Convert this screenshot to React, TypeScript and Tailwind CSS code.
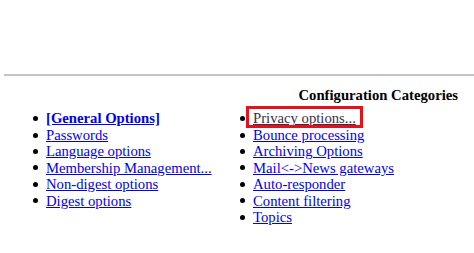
import React from 'react'

const leftItems = [
  { label: '[General Options]', bold: true },
  { label: 'Passwords' },
  { label: 'Language options' },
  { label: 'Membership Management...' },
  { label: 'Non-digest options' },
  { label: 'Digest options' },
]

const rightItems = [
  { label: 'Privacy options...', active: true },
  { label: 'Bounce processing' },
  { label: 'Archiving Options' },
  { label: 'Mail<->News gateways' },
  { label: 'Auto-responder' },
  { label: 'Content filtering' },
  { label: 'Topics' },
]

function Item({ label, bold, active }: { label: string; bold?: boolean; active?: boolean }) {
  return (
    <li className="flex items-center h-[16.45px]">
      <span className="w-[11px] flex justify-start">
        <span className="w-[5px] h-[5px] rounded-full bg-black -ml-[2px]" />
      </span>
      {active ? (
        <span className="relative">
          <a className="underline text-[#3a2f4a]">{label}</a>
          <span className="absolute -left-[7px] -right-[7px] -top-[4px] -bottom-[1px] border-[3px] border-[#e3121c]" />
        </span>
      ) : (
        <a className={`underline text-[#0000ee] ${bold ? 'font-bold' : ''}`}>{label}</a>
      )}
    </li>
  )
}

export default function App() {
  return (
    <div
      className="w-[474px] h-[253px] bg-white overflow-hidden text-[14.7px] leading-[16.45px] text-black"
      style={{ fontFamily: '"Liberation Serif", "Times New Roman", serif' }}
    >
      <div className="pt-[74px] pl-[4px]">
        <div className="h-[2px] bg-[#c4c4c4]" />
      </div>

      {/* Category header */}
      <div className="flex justify-end pr-[16px] mt-[11px] font-bold">Configuration Categories</div>

      {/* Two columns of links */}
      <div className="grid grid-cols-[207px_1fr] mt-[7px] pl-[35px]">
        <ul>
          {leftItems.map((it) => (
            <Item key={it.label} {...it} />
          ))}
        </ul>
        <ul>
          {rightItems.map((it) => (
            <Item key={it.label} {...it} />
          ))}
        </ul>
      </div>
    </div>
  )
}
